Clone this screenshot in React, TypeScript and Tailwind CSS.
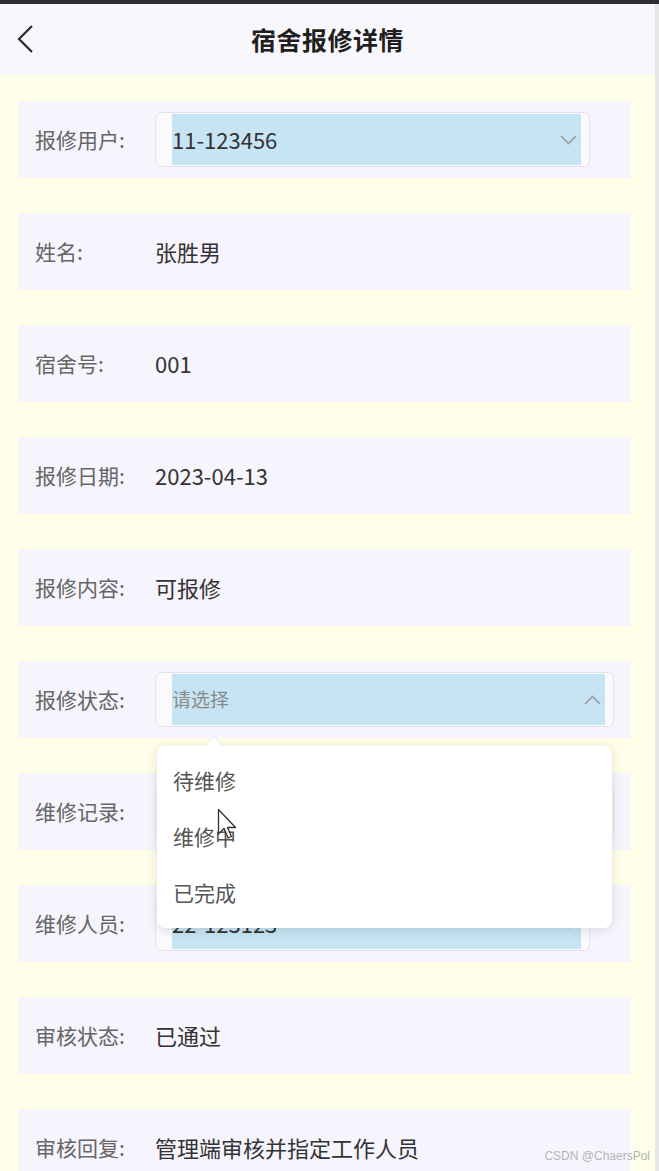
import React from "react";

const font = { fontFamily: '"Noto Sans CJK SC", "Noto Sans", sans-serif' };

function ChevronDown({ up = false }: { up?: boolean }) {
  return (
    <svg width="17" height="10" viewBox="0 0 17 10" className="shrink-0">
      <path
        d={up ? "M1 9 L8.5 1.5 L16 9" : "M1 1 L8.5 8.5 L16 1"}
        fill="none"
        stroke="#9a9a9f"
        strokeWidth="1.6"
      />
    </svg>
  );
}

function Row({ label, children }: { label: string; children: React.ReactNode }) {
  return (
    <div className="h-[77px] shrink-0 bg-[#f6f4fc] flex items-center pl-[16px]">
      <div className="w-[120px] shrink-0 text-[21px] text-[#666]">{label}</div>
      {children}
    </div>
  );
}

function Value({ children }: { children: React.ReactNode }) {
  return <div className="text-[22px] text-[#333]">{children}</div>;
}

function Select({
  value,
  placeholder,
  wide = false,
  open = false,
  highlight = true,
  children,
}: {
  value?: string;
  placeholder?: string;
  wide?: boolean;
  open?: boolean;
  highlight?: boolean;
  children?: React.ReactNode;
}) {
  return (
    <div
      className={`relative h-[55px] ${wide ? "w-[459px]" : "w-[435px]"} border border-[#e4e3ea] rounded-[6px] bg-[#fafafd] flex items-stretch pl-[16px] pr-[8px] py-[1px]`}
    >
      <div
        className={`flex-1 flex items-center justify-between pr-[4px] ${highlight ? "bg-[#c6e4f3]" : ""}`}
      >
        {value ? (
          <span className="text-[22px] text-[#333]">{value}</span>
        ) : placeholder ? (
          <span className="text-[19px] text-[#8a8a8a]">{placeholder}</span>
        ) : (
          <span />
        )}
        <ChevronDown up={open} />
      </div>
      {children}
    </div>
  );
}

function Dropdown() {
  const items = ["待维修", "维修中", "已完成"];
  return (
    <div className="absolute left-[1px] top-[73px] w-[455px] h-[182px] z-20 bg-white rounded-[8px] shadow-[0_2px_12px_rgba(0,0,0,0.12)] py-[7px]">
      <div className="absolute left-[51px] -top-[6px] w-[12px] h-[12px] bg-white rotate-45 shadow-[-1px_-1px_2px_rgba(0,0,0,0.05)]" />
      {items.map((item) => (
        <div key={item} className="relative h-[56px] flex items-center px-[16px] text-[21px] text-[#555]">
          {item}
        </div>
      ))}
      {/* mouse pointer */}
      <svg
        width="22"
        height="34"
        viewBox="0 0 22 34"
        className="absolute left-[60px] top-[62px]"
      >
        <path
          d="M1.5 1.5 L1.5 26 L7 20.5 L11 30 L14.5 28.5 L10.5 19.5 L18.5 19.5 Z"
          fill="rgba(255,255,255,0.85)"
          stroke="#333"
          strokeWidth="1.3"
          strokeLinejoin="round"
        />
      </svg>
    </div>
  );
}

export default function App() {
  return (
    <div className="relative w-[659px] h-[1171px] overflow-hidden flex flex-col bg-[#fffee8]" style={font}>
      <div className="h-[4px] shrink-0 bg-[#2e2e32]" />
      <div className="flex-1 min-h-0 flex">
        <div className="flex-1 min-w-0 flex flex-col">
          <header className="relative h-[71px] shrink-0 bg-[#f8f7fb] flex items-center justify-center">
            <svg
              width="18"
              height="30"
              viewBox="0 0 18 30"
              className="absolute left-[16px] top-[20px]"
            >
              <path d="M16 2 L3 15 L16 28" fill="none" stroke="#2a2a2a" strokeWidth="2.2" />
            </svg>
            <h1 className="text-[25px] font-bold text-[#1f1f1f] tracking-[0.5px]">宿舍报修详情</h1>
          </header>

          <main className="flex flex-col gap-[35px] pt-[26px] pl-[19px] pr-[24px]">
            <Row label="报修用户:">
              <Select value="11-123456" />
            </Row>
            <Row label="姓名:">
              <Value>张胜男</Value>
            </Row>
            <Row label="宿舍号:">
              <Value>001</Value>
            </Row>
            <Row label="报修日期:">
              <Value>2023-04-13</Value>
            </Row>
            <Row label="报修内容:">
              <Value>可报修</Value>
            </Row>
            <Row label="报修状态:">
              <Select placeholder="请选择" wide open>
                <Dropdown />
              </Select>
            </Row>
            <Row label="维修记录:">
              <Select wide highlight={false} />
            </Row>
            <Row label="维修人员:">
              <Select value="22-123123" />
            </Row>
            <Row label="审核状态:">
              <Value>已通过</Value>
            </Row>
            <Row label="审核回复:">
              <Value>管理端审核并指定工作人员</Value>
            </Row>
          </main>
        </div>
        <div className="w-[4px] shrink-0 bg-[#e7e7ea]" />
      </div>

      <div
        className="absolute right-[9px] bottom-[6px] text-[12px] text-[#b4b4b8]"
        style={{ fontFamily: '"Liberation Sans", "Noto Sans CJK SC", sans-serif' }}
      >
        CSDN @ChaersPol
      </div>
    </div>
  );
}
